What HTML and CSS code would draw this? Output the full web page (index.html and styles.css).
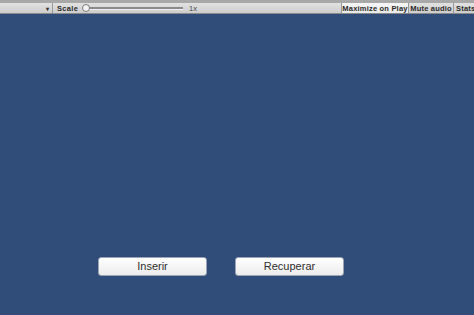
FILE: index.html
```html
<!DOCTYPE html>
<html>
<head>
<meta charset="utf-8">
<link rel="stylesheet" href="styles.css">
</head>
<body>
<div class="toolbar">
  <div class="strip"></div>
  <div class="bar">
    <div class="dropdown"><span class="arrow">▾</span></div>
    <div class="scale">
      <span class="label">Scale</span>
      <div class="slider"><div class="thumb"></div></div>
      <span class="val">1x</span>
    </div>
    <div class="spacer"></div>
    <div class="tbtn on">Maximize on Play</div>
    <div class="tbtn mute">Mute audio</div>
    <div class="tbtn last">Stats</div>
  </div>
</div>
<div class="game">
  <div class="buttons">
    <button class="ui-btn">Inserir</button>
    <button class="ui-btn">Recuperar</button>
  </div>
</div>
</body>
</html>
```
FILE: styles.css
```css
html, body {
  margin: 0;
  padding: 0;
  width: 474px;
  height: 315px;
  overflow: hidden;
  background: #304c79;
}
.toolbar {
  height: 14px;
  display: flex;
  flex-direction: column;
}
.strip {
  height: 3px;
  background: #a8a8a8;
}
.bar {
  height: 11px;
  display: flex;
  align-items: stretch;
  background: linear-gradient(#e2e2e2, #cdcdcd);
  border-bottom: 1px solid #8a8a8a;
  font-family: "Liberation Sans", Arial, sans-serif;
  font-size: 7.5px;
  font-weight: bold;
  color: #2a2a2a;
  box-sizing: border-box;
  overflow: hidden;
}
.dropdown {
  width: 53px;
  flex-shrink: 0;
  border-right: 1px solid #9a9a9a;
  display: flex;
  justify-content: flex-end;
  align-items: center;
  padding-right: 3px;
  box-sizing: border-box;
}
.arrow {
  font-size: 6px;
  color: #333;
}
.scale {
  display: flex;
  align-items: center;
  padding-left: 4px;
  flex-shrink: 0;
}
.label {
  width: 26px;
  letter-spacing: 0.3px;
}
.slider {
  width: 100px;
  height: 2px;
  background: #8a8a8a;
  border-bottom: 1px solid #eee;
  position: relative;
}
.thumb {
  position: absolute;
  left: -1px;
  top: -3px;
  width: 6px;
  height: 6px;
  border-radius: 50%;
  background: #f4f4f4;
  border: 1px solid #7a7a7a;
}
.val {
  margin-left: 6px;
  font-weight: normal;
  color: #444;
}
.spacer {
  flex: 1;
}
.tbtn {
  display: flex;
  align-items: center;
  justify-content: center;
  border-left: 1px solid #9a9a9a;
  white-space: nowrap;
  flex-shrink: 0;
  box-sizing: border-box;
  letter-spacing: 0.2px;
}
.tbtn.on {
  background: linear-gradient(#f6f6f6, #e8e8e8);
  width: 67px;
}
.tbtn.mute {
  width: 45px;
}
.tbtn.last {
  width: 21px;
  justify-content: flex-start;
  padding-left: 2px;
  overflow: hidden;
}
.game {
  height: 301px;
  display: flex;
  flex-direction: column;
  justify-content: flex-end;
}
.buttons {
  display: flex;
  gap: 28px;
  padding-left: 98px;
  padding-bottom: 39px;
}
.ui-btn {
  width: 109px;
  height: 19px;
  margin: 0;
  padding: 0 0 1px;
  border: 1px solid #9aa4b4;
  border-radius: 3px;
  background: linear-gradient(#ffffff, #ececec);
  font-family: "Liberation Sans", Arial, sans-serif;
  font-size: 11px;
  color: #2e2e2e;
  box-sizing: border-box;
}
```
